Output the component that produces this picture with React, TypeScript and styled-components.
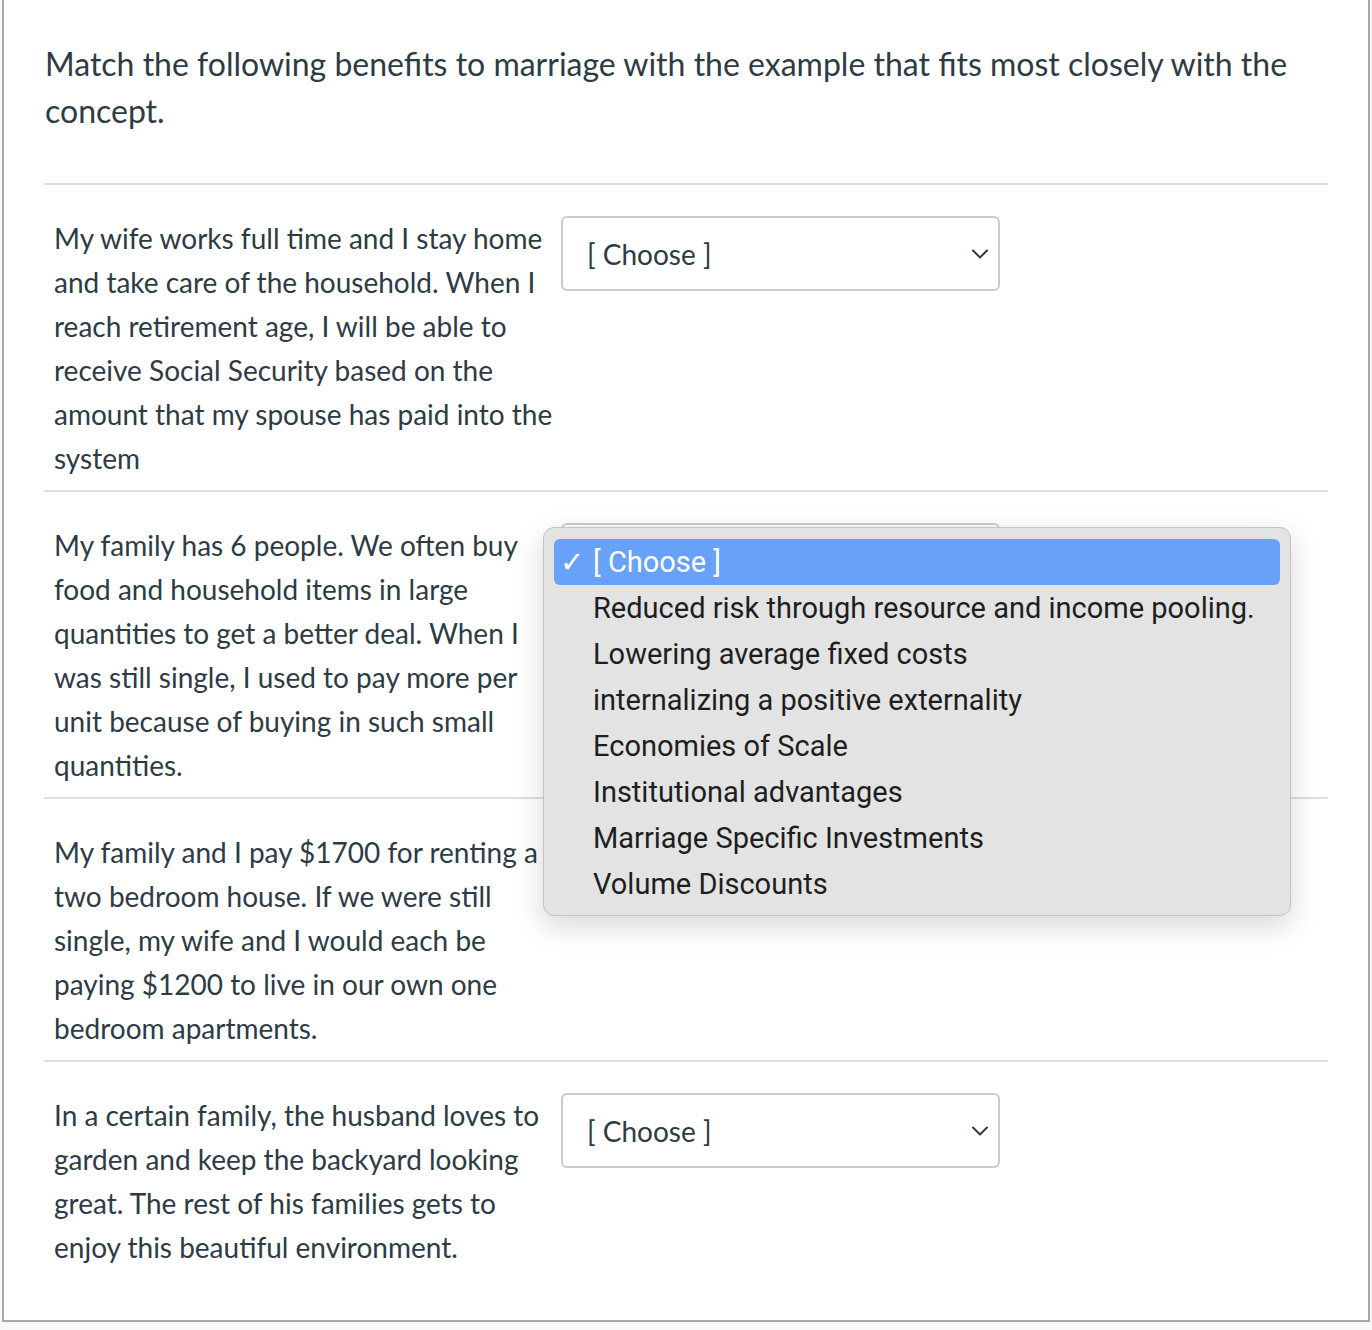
import React from "react";
import styled, { createGlobalStyle } from "styled-components";

const Global = createGlobalStyle`
  html, body { margin: 0; padding: 0; background: #f8f8f8; }
  body { font-family: Lato, "Noto Sans", sans-serif; color: #2d3b45; }
`;

const Frame = styled.div`
  box-sizing: border-box;
  width: 1368px;
  margin: -2px 0 0 2px;
  background: #fff;
  border: 2px solid #a8a8a8;
  border-top: none;
  padding: 42px 40px 41px 40px;
`;

const Question = styled.div`
  font-size: 32px;
  line-height: 47px;
  padding-bottom: 49px;
  padding-left: 1px;
`;

const Row = styled.div`
  display: flex;
  align-items: flex-start;
  border-top: 2px solid #dedede;
  padding: 31px 10px 10px 10px;
`;

const Label = styled.div`
  width: 503px;
  flex: none;
  font-size: 28px;
  line-height: 44px;
`;

const SelectWrap = styled.div`
  position: relative;
  margin-left: 4px;
`;

const SelectBox = styled.div`
  box-sizing: border-box;
  width: 439px;
  height: 75px;
  border: 2px solid #cbcbcb;
  border-radius: 6px;
  background: #fff;
  display: flex;
  align-items: center;
  justify-content: space-between;
  padding: 0 8px 0 24px;
  font-size: 28px;
`;

const Menu = styled.div`
  position: absolute;
  left: -18px;
  top: 4px;
  box-sizing: border-box;
  width: 748px;
  height: 389px;
  padding: 11px 10px 10px 10px;
  background: #e3e3e3;
  border: 1px solid #c4c4c4;
  border-radius: 11px;
  box-shadow: 0 10px 30px rgba(0, 0, 0, 0.16);
  font-family: Roboto, "Liberation Sans", sans-serif;
  z-index: 5;
`;

const Item = styled.div<{ $active?: boolean }>`
  display: flex;
  align-items: center;
  height: 46px;
  border-radius: 6px;
  font-size: 29px;
  color: ${(p) => (p.$active ? "#fff" : "#1e1e1e")};
  background: ${(p) => (p.$active ? "#68a1f8" : "transparent")};
`;

const Check = styled.span`
  width: 39px;
  flex: none;
  padding-left: 6px;
  box-sizing: border-box;
  font-size: 29px;
`;

const Chevron = () => (
  <svg width="20" height="20" viewBox="0 0 20 20">
    <path d="M3 6.5 L10 13.5 L17 6.5" fill="none" stroke="#2d3b45" strokeWidth="2" strokeLinecap="round" strokeLinejoin="round" />
  </svg>
);

const options = [
  "[ Choose ]",
  "Reduced risk through resource and income pooling.",
  "Lowering average fixed costs",
  "internalizing a positive externality",
  "Economies of Scale",
  "Institutional advantages",
  "Marriage Specific Investments",
  "Volume Discounts",
];

const rows = [
  "My wife works full time and I stay home and take care of the household. When I reach retirement age, I will be able to receive Social Security based on the amount that my spouse has paid into the system",
  "My family has 6 people. We often buy food and household items in large quantities to get a better deal. When I was still single, I used to pay more per unit because of buying in such small quantities.",
  "My family and I pay $1700 for renting a two bedroom house. If we were still single, my wife and I would each be paying $1200 to live in our own one bedroom apartments.",
  "In a certain family, the husband loves to garden and keep the backyard looking great. The rest of his families gets to enjoy this beautiful environment.",
];

export default function App() {
  return (
    <>
      <Global />
      <Frame>
        <Question>
          Match the following benefits to marriage with the example that fits most closely with the concept.
        </Question>
        {rows.map((text, i) => (
          <Row key={i}>
            <Label>{text}</Label>
            <SelectWrap>
              <SelectBox>
                <span>[ Choose ]</span>
                <Chevron />
              </SelectBox>
              {i === 1 && (
                <Menu>
                  {options.map((o, j) => (
                    <Item key={j} $active={j === 0}>
                      <Check>{j === 0 ? "✓" : ""}</Check>
                      {o}
                    </Item>
                  ))}
                </Menu>
              )}
            </SelectWrap>
          </Row>
        ))}
      </Frame>
    </>
  );
}
